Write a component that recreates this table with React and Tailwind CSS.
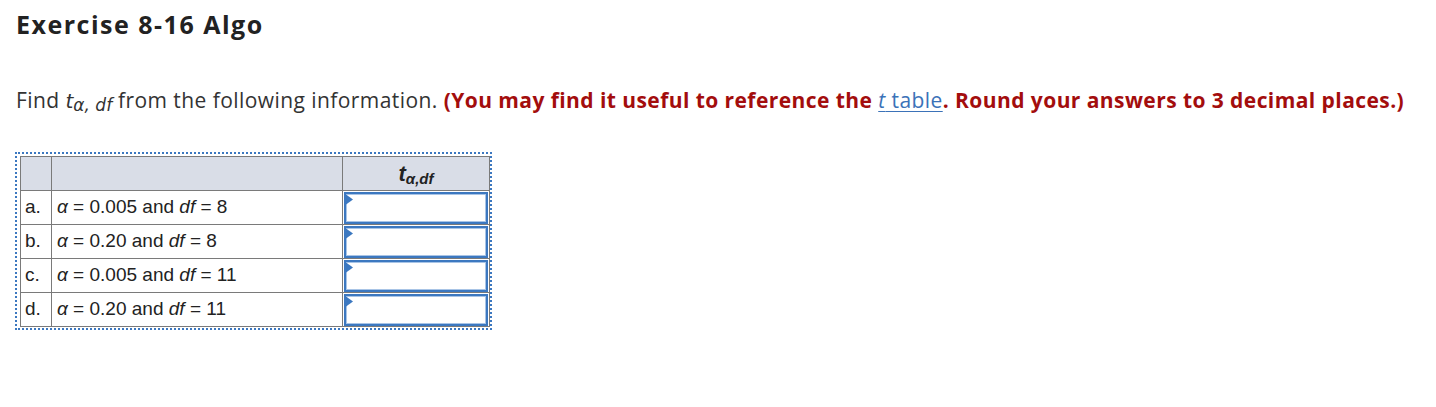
import React from "react";

const rows = [
  { l: "a.", a: "0.005", df: "8" },
  { l: "b.", a: "0.20", df: "8" },
  { l: "c.", a: "0.005", df: "11" },
  { l: "d.", a: "0.20", df: "11" },
];

function Cell({ children, className = "" }) {
  return <td className={"border border-[#7a7a7a] p-0 " + className}>{children}</td>;
}

export default function App() {
  return (
    <div className="bg-white w-[1436px] h-[407px] pl-4 pt-[8px] text-[#333]" style={{ fontFamily: "'Open Sans', Lato, sans-serif" }}>
      <h1 className="text-[25px] leading-[33px] font-bold text-[#222] tracking-[1.5px]">Exercise 8-16 Algo</h1>
      <p className="mt-[46px] text-[21px] leading-[26px] text-[#333] whitespace-nowrap tracking-[0.43px]">
        Find{" "}
        <span className="italic tracking-normal" style={{ fontFamily: "'DejaVu Sans', sans-serif" }}>
          <span className="text-[20px]">t</span>
          <sub className="text-[17px] relative top-[3px]">α, df</sub>
        </span>{" "}
        from the following information.{" "}
        <span className="font-bold text-[#a30d0d]">
          (You may find it useful to reference the{" "}
          <span className="font-normal text-[#3b72b8] underline decoration-1 underline-offset-[3px]">
            <span className="italic">t</span> table
          </span>
          . Round your answers to 3 decimal places.)
        </span>
      </p>
      <div className="mt-[38px] -ml-px w-[477px] border-2 border-dotted border-[#3c78c0] pl-[3px] pt-[2px] pb-[1px]">
        <table className="border-collapse w-[469px] table-fixed" style={{ fontFamily: "'Liberation Sans', Arial, sans-serif" }}>
          <colgroup>
            <col className="w-[31px]" />
            <col className="w-[291px]" />
            <col className="w-[147px]" />
          </colgroup>
          <thead>
            <tr className="h-[34px] bg-[#d9dde7]">
              <Cell />
              <Cell />
              <Cell className="text-center align-middle">
                <span className="font-bold italic text-[#222]">
                  <span className="text-[22px]">t</span>
                  <span className="text-[15px] relative top-[3px]">α,df</span>
                </span>
              </Cell>
            </tr>
          </thead>
          <tbody>
            {rows.map((r) => (
              <tr key={r.l} className="h-[34px] text-[19px] text-[#222]">
                <Cell className="pl-[4px]">{r.l}</Cell>
                <Cell className="pl-[5px]">
                  <span className="italic">α</span> = {r.a} and <span className="italic">df</span> = {r.df}
                </Cell>
                <Cell className="p-0">
                  <div className="relative h-[32px] mx-px border-2 border-[#3c78c0] bg-white">
                    <div className="absolute inset-0 border border-[#a8c4e6]" />
                    <svg className="absolute -left-[2px] -top-[1px] z-10" width="9" height="13" viewBox="0 0 9 13">
                      <polygon points="0,0 9,6.5 0,13" fill="#3c78c0" />
                    </svg>
                  </div>
                </Cell>
              </tr>
            ))}
          </tbody>
        </table>
      </div>
    </div>
  );
}
